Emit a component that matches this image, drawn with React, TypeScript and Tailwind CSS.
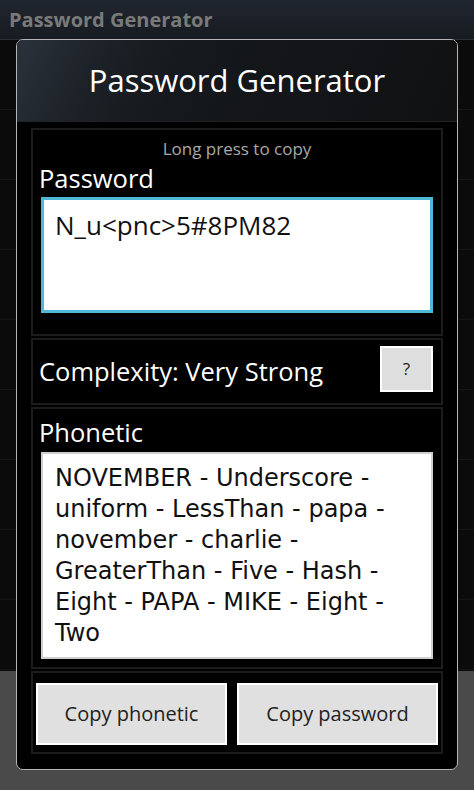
import React from 'react';

const font = { fontFamily: '"Open Sans", "Noto Sans", sans-serif' };

const phoneticLines = [
  'NOVEMBER - Underscore -',
  'uniform - LessThan - papa -',
  'november - charlie -',
  'GreaterThan - Five - Hash -',
  'Eight - PAPA - MIKE - Eight -',
  'Two',
];

function Panel({ className, children }: { className?: string; children: React.ReactNode }) {
  return <div className={`border-2 border-[#1c1c1c] bg-black ${className ?? ''}`}>{children}</div>;
}

export default function App() {
  return (
    <div className="relative w-[474px] h-[790px] overflow-hidden bg-[#0c0c0c]" style={font}>
      {/* activity title bar */}
      <div className="h-[40px] bg-[linear-gradient(180deg,#20262f,#171b22)] border-b border-[#2a2f38] flex items-center pl-[9px]">
        <span className="text-[20px] font-bold text-[#7a7a7a]">Password Generator</span>
      </div>

      {/* dimmed activity content behind the dialog */}
      <div className="flex flex-col">
        {[0, 1, 2, 3, 4, 5, 6, 7, 8].map((i) => (
          <div key={i} className="h-[70px] border-b border-[#161616] bg-[#0b0b0b]" />
        ))}
      </div>
      <div className="absolute left-0 right-0 top-[671px] bottom-0 bg-[#4a4a4a]" />

      {/* dialog */}
      <div className="absolute left-[16px] top-[39px] w-[442px] h-[731px] rounded-[7px] border border-[#b4b4b4] bg-black overflow-hidden flex flex-col">
        <div className="h-[82px] shrink-0 flex items-center justify-center border-b border-[#222] bg-[linear-gradient(115deg,#2b323b_0%,#1d2228_18%,#15181c_38%,#101113_100%)]">
          <span className="text-[31px] text-white">Password Generator</span>
        </div>

        <div className="flex-1 flex flex-col gap-[2px] px-[14px] pt-[6px] pb-[15px]">
          <Panel className="h-[208px] flex flex-col px-[8px]">
            <div className="text-center text-[17px] text-[#a8a8a8] mt-[8px] leading-[22px]">Long press to copy</div>
            <div className="text-[25.5px] text-white leading-[32px] mt-[2px] -ml-[2px]">Password</div>
            <div className="mt-[3px] h-[116px] bg-white border-[3px] border-[#4fb8d8] px-[11px] pt-[9px]">
              <span className="text-[26px] text-[#111] leading-[32px]">N_u&lt;pnc&gt;5#8PM82</span>
            </div>
          </Panel>

          <Panel className="h-[67px] flex items-center justify-between pl-[6px] pr-[8px]">
            <span className="text-[25.5px] text-white">Complexity: Very Strong</span>
            <button className="w-[53px] h-[46px] -mt-[5px] bg-[#dedede] border-2 border-white text-[17px] text-[#222]">?</button>
          </Panel>

          <Panel className="h-[262px] flex flex-col px-[8px]">
            <div className="text-[25.5px] text-white leading-[32px] mt-[7px] -ml-[2px]">Phonetic</div>
            <div
              className="mt-[4px] h-[207px] bg-white border-2 border-[#cfcfcf] pl-[12px] pt-[9px]"
              style={{ fontFamily: '"DejaVu Sans", "Open Sans", sans-serif' }}
            >
              {phoneticLines.map((l) => (
                <div key={l} className="text-[24px] text-[#111] leading-[31px] whitespace-nowrap">
                  {l}
                </div>
              ))}
            </div>
          </Panel>

          <Panel className="flex-1 flex gap-[10px] px-[3px] pt-[10px] pb-[5px]">
            <button className="w-[191px] h-[62px] bg-[#e0e0e0] border-2 border-white text-[20px] text-[#222]">Copy phonetic</button>
            <button className="flex-1 h-[62px] bg-[#e0e0e0] border-2 border-white text-[20px] text-[#222]">Copy password</button>
          </Panel>
        </div>
      </div>
    </div>
  );
}
